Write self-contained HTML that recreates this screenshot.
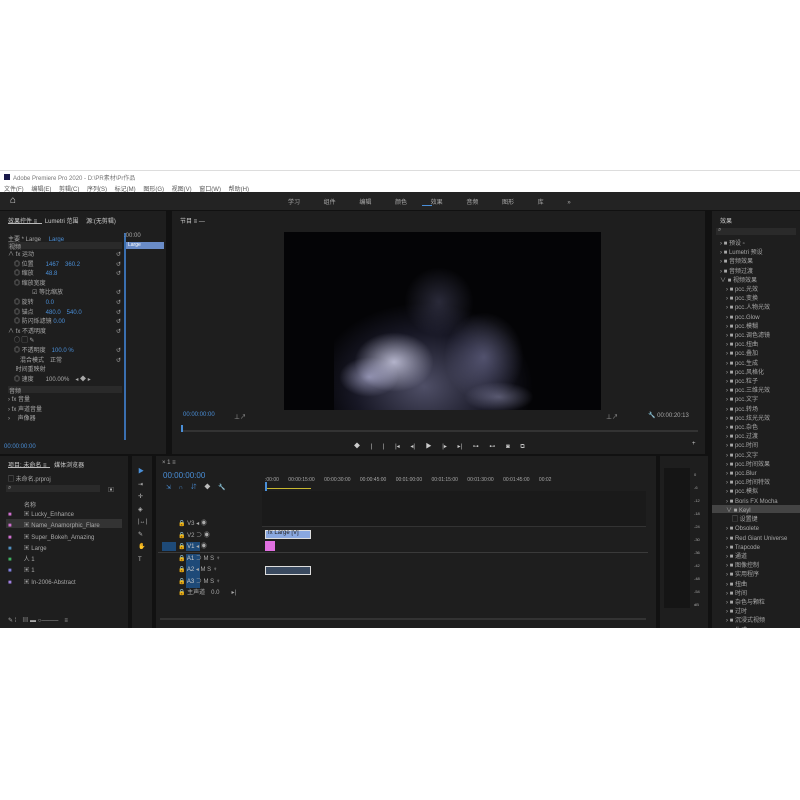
<!DOCTYPE html>
<html><head><meta charset="utf-8"><style>
*{margin:0;padding:0;box-sizing:border-box}
body{width:800px;height:800px;background:#fff;position:relative;overflow:hidden;font-family:"Liberation Sans","Noto Sans CJK SC",sans-serif;font-size:6px;color:#aaa}
.a{position:absolute}
.p{position:absolute;background:#1e1e1e}
.t{position:absolute;white-space:nowrap;font-size:6px;color:#a8a8a8}
.b{color:#4a8fd8}
</style></head><body>
<div class="a" style="left:0;top:170px;width:800px;height:22px;background:#fff;border-top:1px solid #ddd"></div>
<div class="a" style="left:4px;top:174px;width:6px;height:6px;background:#1a1a4a"></div>
<div class="t" style="left:13px;top:173px;color:#777">Adobe Premiere Pro 2020 - D:\PR素材\Pr作品</div>
<div class="t" style="left:4px;top:184px;color:#555;word-spacing:6px">文件(F) 编辑(E) 剪辑(C) 序列(S) 标记(M) 图形(G) 视图(V) 窗口(W) 帮助(H)</div>
<div class="a" style="left:0;top:192px;width:800px;height:436px;background:#111"></div>
<div class="a" style="left:0;top:192px;width:800px;height:18px;background:#232323"></div>
<div class="t" style="left:10px;top:195px;font-size:10px;color:#ddd">⌂</div>
<div class="t" style="left:288px;top:197px;word-spacing:22px;color:#aaa">学习 组件 编辑 颜色 效果 音频 图形 库 »</div>
<div class="a" style="left:422px;top:205px;width:10px;height:1px;background:#4a8fd8"></div>
<div class="p" style="left:0;top:211px;width:166px;height:243px"></div>
<div class="t" style="left:8px;top:216px;color:#ccc">效果控件 ≡　 Lumetri 范围　 源:(无剪辑)</div>
<div class="a" style="left:8px;top:223px;width:34px;height:1px;background:#bbb"></div>
<div class="t" style="left:8px;top:234px">主要 * Large　 <span class="b">Large</span></div>
<div class="a" style="left:124px;top:233px;width:2px;height:207px;background:#3a6fb0"></div>
<div class="a" style="left:126px;top:242px;width:38px;height:7px;background:#6a8cc8"></div>
<div class="t" style="left:128px;top:242px;color:#fff;font-size:5px">Large</div>
<div class="t" style="left:124px;top:233px">:00:00</div>
<div class="a" style="left:8px;top:242px;width:114px;height:7px;background:#2a2a2a"></div>
<div class="t" style="left:9px;top:242px">视频</div>
<div class="t" style="left:8px;top:251px;line-height:9.6px">∧ fx 运动<br>　◎ 位置　　<span class="b">1467　360.2</span><br>　◎ 缩放　　<span class="b">48.8</span><br>　◎ 缩放宽度<br>　　　　☑ 等比缩放<br>　◎ 旋转　　<span class="b">0.0</span><br>　◎ 锚点　　<span class="b">480.0　540.0</span><br>　◎ 防闪烁滤镜 <span class="b">0.00</span><br>∧ fx 不透明度<br>　◯ ▢ ✎<br>　◎ 不透明度　<span class="b">100.0 %</span><br>　　混合模式　正常<br>　 时间重映射<br>　◎ 速度　　100.00%　◂ ◆ ▸</div>
<div class="t" style="left:116px;top:251px;line-height:9.6px">↺<br>↺<br>↺<br><br>↺<br>↺<br>↺<br>↺<br>↺<br><br>↺<br>↺</div>
<div class="a" style="left:8px;top:386px;width:114px;height:7px;background:#2a2a2a"></div>
<div class="t" style="left:9px;top:386px">音频</div>
<div class="t" style="left:8px;top:396px;line-height:9.6px">› fx 音量<br>› fx 声道音量<br>› 　声像器</div>
<div class="t" style="left:4px;top:444px;color:#4a8fd8">00:00:00:00</div>
<div class="p" style="left:172px;top:211px;width:533px;height:243px"></div>
<div class="t" style="left:180px;top:216px;color:#ccc">节目 ≡ —</div>
<div class="a" style="left:284px;top:232px;width:317px;height:178px;background:#040406;overflow:hidden">
 <div class="a" style="left:50px;top:70px;width:200px;height:130px;background:radial-gradient(ellipse at 45% 65%,rgba(170,170,220,.45),rgba(100,100,160,.2) 45%,rgba(0,0,0,0) 70%)"></div>
 <div class="a" style="left:70px;top:100px;width:80px;height:60px;background:radial-gradient(ellipse,rgba(225,225,250,.75),rgba(0,0,0,0) 70%)"></div>
 <div class="a" style="left:55px;top:125px;width:60px;height:40px;background:radial-gradient(ellipse,rgba(200,200,240,.6),rgba(0,0,0,0) 70%)"></div>
 <div class="a" style="left:160px;top:80px;width:80px;height:90px;background:radial-gradient(ellipse,rgba(170,170,220,.4),rgba(0,0,0,0) 70%)"></div>
 <div class="a" style="left:120px;top:35px;width:70px;height:70px;background:radial-gradient(ellipse,rgba(140,140,190,.28),rgba(0,0,0,0) 70%)"></div>
 <div class="a" style="left:180px;top:150px;width:70px;height:30px;background:radial-gradient(ellipse,rgba(190,190,230,.4),rgba(0,0,0,0) 70%)"></div>
</div>
<div class="t" style="left:183px;top:412px;color:#4a8fd8">00:00:00:00</div>
<div class="t" style="left:234px;top:412px">⊥↗</div>
<div class="t" style="left:606px;top:412px">⊥↗</div>
<div class="t" style="left:648px;top:412px">🔧 00:00:20:13</div>
<div class="a" style="left:182px;top:430px;width:516px;height:2px;background:#333"></div>
<div class="a" style="left:181px;top:425px;width:2px;height:7px;background:#4a8fd8"></div>
<div class="t" style="left:354px;top:441px;word-spacing:9px;color:#ccc">◆ | | |◂ ◂| ▶ |▸ ▸| ⊶ ⊷ ◙ ⧉</div>
<div class="t" style="left:692px;top:441px;color:#ccc">+</div>
<div class="p" style="left:712px;top:211px;width:88px;height:417px"></div>
<div class="t" style="left:720px;top:216px;color:#ccc">效果</div>
<div class="a" style="left:716px;top:228px;width:80px;height:7px;background:#2a2a2a"></div>
<div class="t" style="left:718px;top:227px">⌕</div>
<div class="a" style="left:712px;top:505px;width:88px;height:8px;background:#444"></div>
<div class="t" style="left:720px;top:240px;line-height:9.2px">› ■ 预设 ▫<br>› ■ Lumetri 预设<br>› ■ 音频效果<br>› ■ 音频过渡<br>∨ ■ 视频效果<br>　› ■ pcc.光效<br>　› ■ pcc.变换<br>　› ■ pcc.人物光效<br>　› ■ pcc.Glow<br>　› ■ pcc.模糊<br>　› ■ pcc.调色滤镜<br>　› ■ pcc.扭曲<br>　› ■ pcc.叠加<br>　› ■ pcc.生成<br>　› ■ pcc.风格化<br>　› ■ pcc.粒子<br>　› ■ pcc.三维光效<br>　› ■ pcc.文字<br>　› ■ pcc.转场<br>　› ■ pcc.炫光光效<br>　› ■ pcc.杂色<br>　› ■ pcc.过渡<br>　› ■ pcc.时间<br>　› ■ pcc.文字<br>　› ■ pcc.时间效果<br>　› ■ pcc.Blur<br>　› ■ pcc.时间特效<br>　› ■ pcc.模拟<br>　› ■ Boris FX Mocha<br>　∨ ■ Keyl<br>　　▢ 设置键<br>　› ■ Obsolete<br>　› ■ Red Giant Universe<br>　› ■ Trapcode<br>　› ■ 通道<br>　› ■ 图像控制<br>　› ■ 实用程序<br>　› ■ 扭曲<br>　› ■ 时间<br>　› ■ 杂色与颗粒<br>　› ■ 过时<br>　› ■ 沉浸式视频<br>　› ■ 生成</div>
<div class="p" style="left:0;top:456px;width:128px;height:172px"></div>
<div class="t" style="left:8px;top:460px;color:#ccc">项目: 未命名 ≡　 媒体浏览器</div>
<div class="a" style="left:8px;top:467px;width:42px;height:1px;background:#bbb"></div>
<div class="t" style="left:8px;top:474px">▢ 未命名.prproj</div>
<div class="a" style="left:6px;top:485px;width:94px;height:7px;background:#2a2a2a"></div>
<div class="t" style="left:8px;top:485px">⌕</div>
<div class="t" style="left:108px;top:485px">▣</div>
<div class="t" style="left:24px;top:500px">名称</div>
<div class="a" style="left:6px;top:519px;width:116px;height:9px;background:#333"></div>
<div class="t" style="left:8px;top:510px;line-height:11.3px"><span style="color:#d070d0">■</span>　　▣ Lucky_Enhance<br><span style="color:#d070d0">■</span>　　▣ Name_Anamorphic_Flare<br><span style="color:#d070d0">■</span>　　▣ Super_Bokeh_Amazing<br><span style="color:#5090c0">■</span>　　▣ Large<br><span style="color:#40b060">■</span>　　人 1<br><span style="color:#8080e0">■</span>　　▣ 1<br><span style="color:#a080e0">■</span>　　▣ In-2006-Abstract</div>
<div class="t" style="left:8px;top:615px">✎ ⁞　▤ ▬ ○────　≡</div>
<div class="p" style="left:132px;top:456px;width:20px;height:172px"></div>
<div class="t" style="left:138px;top:466px;line-height:12.5px;color:#bbb"><span style="color:#4a8fd8">▶</span><br>⇥<br>✛<br>◈<br>|↔|<br>✎<br>✋<br>T</div>
<div class="p" style="left:156px;top:456px;width:500px;height:172px"></div>
<div class="t" style="left:162px;top:460px">× 1 ≡</div>
<div class="t" style="left:163px;top:471px;font-size:8px;color:#4a8fd8">00:00:00:00</div>
<div class="t" style="left:166px;top:482px;color:#4a8fd8;word-spacing:6px">⇲ ∩ ⇵ <span style="color:#bbb">◆ 🔧</span></div>
<div class="t" style="left:265px;top:477px;font-size:5px;word-spacing:8px">:00:00 00:00:15:00 00:00:30:00 00:00:45:00 00:01:00:00 00:01:15:00 00:01:30:00 00:01:45:00 00:02</div>
<div class="a" style="left:265px;top:488px;width:46px;height:1px;background:#c8b830"></div>
<div class="a" style="left:265px;top:482px;width:2px;height:9px;background:#4a8fd8"></div>
<div class="a" style="left:262px;top:491px;width:384px;height:36px;background:#1a1a1a;border-bottom:1px solid #333"></div>
<div class="a" style="left:158px;top:552px;width:490px;height:1px;background:#3a3a3a"></div>
<div class="a" style="left:162px;top:542px;width:14px;height:9px;background:#1e4a78"></div>
<div class="a" style="left:186px;top:542px;width:14px;height:9px;background:#1e4a78"></div>
<div class="a" style="left:186px;top:554px;width:14px;height:34px;background:#1e4a78"></div>
<div class="t" style="left:178px;top:519px;line-height:11.5px;color:#aaa">🔒 V3 ◂ ◉<br>🔒 V2 ⊃ ◉<br>🔒 <span style="color:#ccc">V1</span> ◂ ◉<br>🔒 <span style="color:#ccc">A1</span> ⊃ M S ♆<br>🔒 <span style="color:#ccc">A2</span> ◂ M S ♆<br>🔒 <span style="color:#ccc">A3</span> ⊃ M S ♆<br>🔒 主声道　0.0　　▸|</div>
<div class="a" style="left:265px;top:530px;width:46px;height:9px;background:#8aa8e0;border:1px solid #ddd"></div>
<div class="t" style="left:268px;top:530px;color:#222">fx Large [V]</div>
<div class="a" style="left:265px;top:541px;width:10px;height:10px;background:#e070e0"></div>
<div class="a" style="left:265px;top:566px;width:46px;height:9px;background:#3a4a60;border:1px solid #ddd"></div>
<div class="a" style="left:160px;top:618px;width:486px;height:2px;background:#333"></div>
<div class="p" style="left:660px;top:456px;width:48px;height:172px"></div>
<div class="a" style="left:664px;top:468px;width:26px;height:140px;background:#151515"></div>
<div class="t" style="left:694px;top:468px;line-height:13px;font-size:4px">0<br>-6<br>-12<br>-18<br>-24<br>-30<br>-36<br>-42<br>-48<br>-54<br>dB</div>
<div class="a" style="left:0;top:628px;width:800px;height:172px;background:#fff"></div>
</body></html>
